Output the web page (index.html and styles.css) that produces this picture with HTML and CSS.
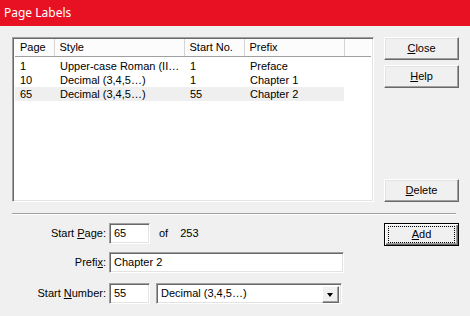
FILE: index.html
```html
<!DOCTYPE html>
<html lang="en">
<head>
  <meta charset="UTF-8">
  <title>Page Labels</title>
  <link rel="stylesheet" href="styles.css">
</head>
<body>
  <div class="window">
    <div class="titlebar">Page Labels</div>
    <div class="content">
      <div class="top">
        <div class="list">
          <table class="labels">
            <colgroup>
              <col style="width:39px"><col style="width:130px"><col style="width:60px"><col style="width:100px"><col>
            </colgroup>
            <thead>
              <tr><th>Page</th><th>Style</th><th>Start No.</th><th>Prefix</th><th></th></tr>
            </thead>
            <tbody>
              <tr><td>1</td><td>Upper-case Roman (II&hellip;</td><td>1</td><td>Preface</td><td class="filler"></td></tr>
              <tr><td>10</td><td>Decimal (3,4,5&hellip;)</td><td>1</td><td>Chapter 1</td><td class="filler"></td></tr>
              <tr class="selected"><td>65</td><td>Decimal (3,4,5&hellip;)</td><td>55</td><td>Chapter 2</td><td class="filler"></td></tr>
            </tbody>
          </table>
        </div>
        <div class="buttons">
          <div class="btn"><u>C</u>lose</div>
          <div class="btn"><u>H</u>elp</div>
          <div class="btn push-down"><u>D</u>elete</div>
        </div>
      </div>
      <div class="separator"></div>
      <div class="form">
        <div class="row row-page">
          <span class="label">Start <u>P</u>age:</span>
          <div class="field short">65</div>
          <span class="of">of</span>
          <span class="total">253</span>
          <div class="btn default"><span class="focus"><u>A</u>dd</span></div>
        </div>
        <div class="row row-prefix">
          <span class="label">Prefi<u>x</u>:</span>
          <div class="field wide">Chapter 2</div>
        </div>
        <div class="row row-number">
          <span class="label">Start <u>N</u>umber:</span>
          <div class="field short">55</div>
          <div class="field combo">
            <span class="combo-text">Decimal (3,4,5&hellip;)</span>
            <span class="combo-arrow"></span>
          </div>
        </div>
      </div>
    </div>
  </div>
</body>
</html>
```

FILE: styles.css
```css
body {
  margin: 0;
  font-family: "Liberation Sans", Arial, sans-serif;
  font-size: 11px;
  color: #000;
  background-color: #f0f0f0;
}
.window {
  width: 470px;
  height: 316px;
  background-color: #f0f0f0;
  overflow: hidden;
}
.titlebar {
  height: 26px;
  line-height: 26px;
  padding-left: 4px;
  background-color: #e81123;
  color: #fff;
  font-family: "Noto Sans", "Liberation Sans", sans-serif;
  font-size: 12px;
}
.content {
  padding: 11px 11px 0 12px;
}
.top {
  display: flex;
  height: 165px;
}
.list {
  width: 362px;
  box-sizing: border-box;
  border: 1px solid;
  border-color: #a0a0a0 #fff #fff #a0a0a0;
  box-shadow: inset 1px 1px 0 #696969, inset -1px -1px 0 #e3e3e3;
  background-color: #fff;
  padding: 1px 2px 2px 2px;
}
.labels {
  width: 100%;
  table-layout: fixed;
  border-collapse: collapse;
}
.labels th {
  height: 17px;
  padding: 0 0 0 5px;
  text-align: left;
  font-weight: normal;
  background-color: #fcfcfc;
  border-right: 1px solid #d5d5d5;
  border-bottom: 1px solid #a0a0a0;
  box-sizing: border-box;
}
.labels th:last-child {
  border-right: none;
}
.labels tbody tr:first-child td {
  padding-top: 2px;
}
.labels td {
  height: 14px;
  line-height: 14px;
  padding: 0 0 0 5px;
  white-space: nowrap;
  overflow: hidden;
}
.labels td + td {
  padding-left: 6px;
}
.labels tr.selected td {
  background-color: #efefef;
}
.labels tr.selected td.filler {
  background-color: transparent;
}
.buttons {
  display: flex;
  flex-direction: column;
  margin-left: 10px;
}
.btn {
  width: 75px;
  height: 23px;
  box-sizing: border-box;
  line-height: 21px;
  text-align: center;
  background-color: #f0f0f0;
  border: 1px solid;
  border-color: #fff #696969 #696969 #fff;
  box-shadow: inset -1px -1px 0 #a0a0a0, inset 1px 1px 0 #e3e3e3;
  margin-bottom: 5px;
}
.push-down {
  margin-top: auto;
  margin-bottom: 0;
}
.btn.default {
  margin: 0 0 0 auto;
  border: 1px solid #000;
  box-shadow: inset 1px 1px 0 #fff, inset -1px -1px 0 #696969, inset -2px -2px 0 #a0a0a0;
  padding: 2px 3px 0 3px;
  line-height: normal;
}
.focus {
  display: block;
  height: 15px;
  line-height: 15px;
  border: 1px dotted #000;
}
.separator {
  width: 444px;
  height: 1px;
  margin-top: 11px;
  background-color: #a0a0a0;
  border-bottom: 1px solid #fff;
}
.form {
  display: flex;
  flex-direction: column;
  padding-top: 8px;
}
.row {
  display: flex;
  align-items: flex-start;
}
.row-prefix {
  margin-top: 6px;
}
.row-number {
  margin-top: 10px;
}
.label {
  width: 94px;
  margin-right: 3px;
  text-align: right;
  line-height: 21px;
}
.field {
  height: 21px;
  line-height: 19px;
  box-sizing: border-box;
  padding-left: 4px;
  background-color: #fff;
  border: 1px solid;
  border-color: #a0a0a0 #fff #fff #a0a0a0;
  box-shadow: inset 1px 1px 0 #696969, inset -1px -1px 0 #e3e3e3;
}
.short {
  width: 41px;
}
.wide {
  width: 235px;
}
.of {
  margin-left: 9px;
  line-height: 21px;
}
.total {
  margin-left: 12px;
  line-height: 21px;
}
.combo {
  display: flex;
  width: 186px;
  margin-left: 6px;
  padding: 2px 2px 2px 4px;
}
.combo-text {
  flex: 1;
  line-height: 15px;
}
.combo-arrow {
  position: relative;
  width: 17px;
  height: 17px;
  box-sizing: border-box;
  background-color: #f0f0f0;
  border: 1px solid;
  border-color: #fff #696969 #696969 #fff;
  box-shadow: inset -1px -1px 0 #a0a0a0;
}
.combo-arrow::after {
  content: "";
  position: absolute;
  left: 4px;
  top: 6px;
  border-left: 3.5px solid transparent;
  border-right: 3.5px solid transparent;
  border-top: 4px solid #000;
}
```
